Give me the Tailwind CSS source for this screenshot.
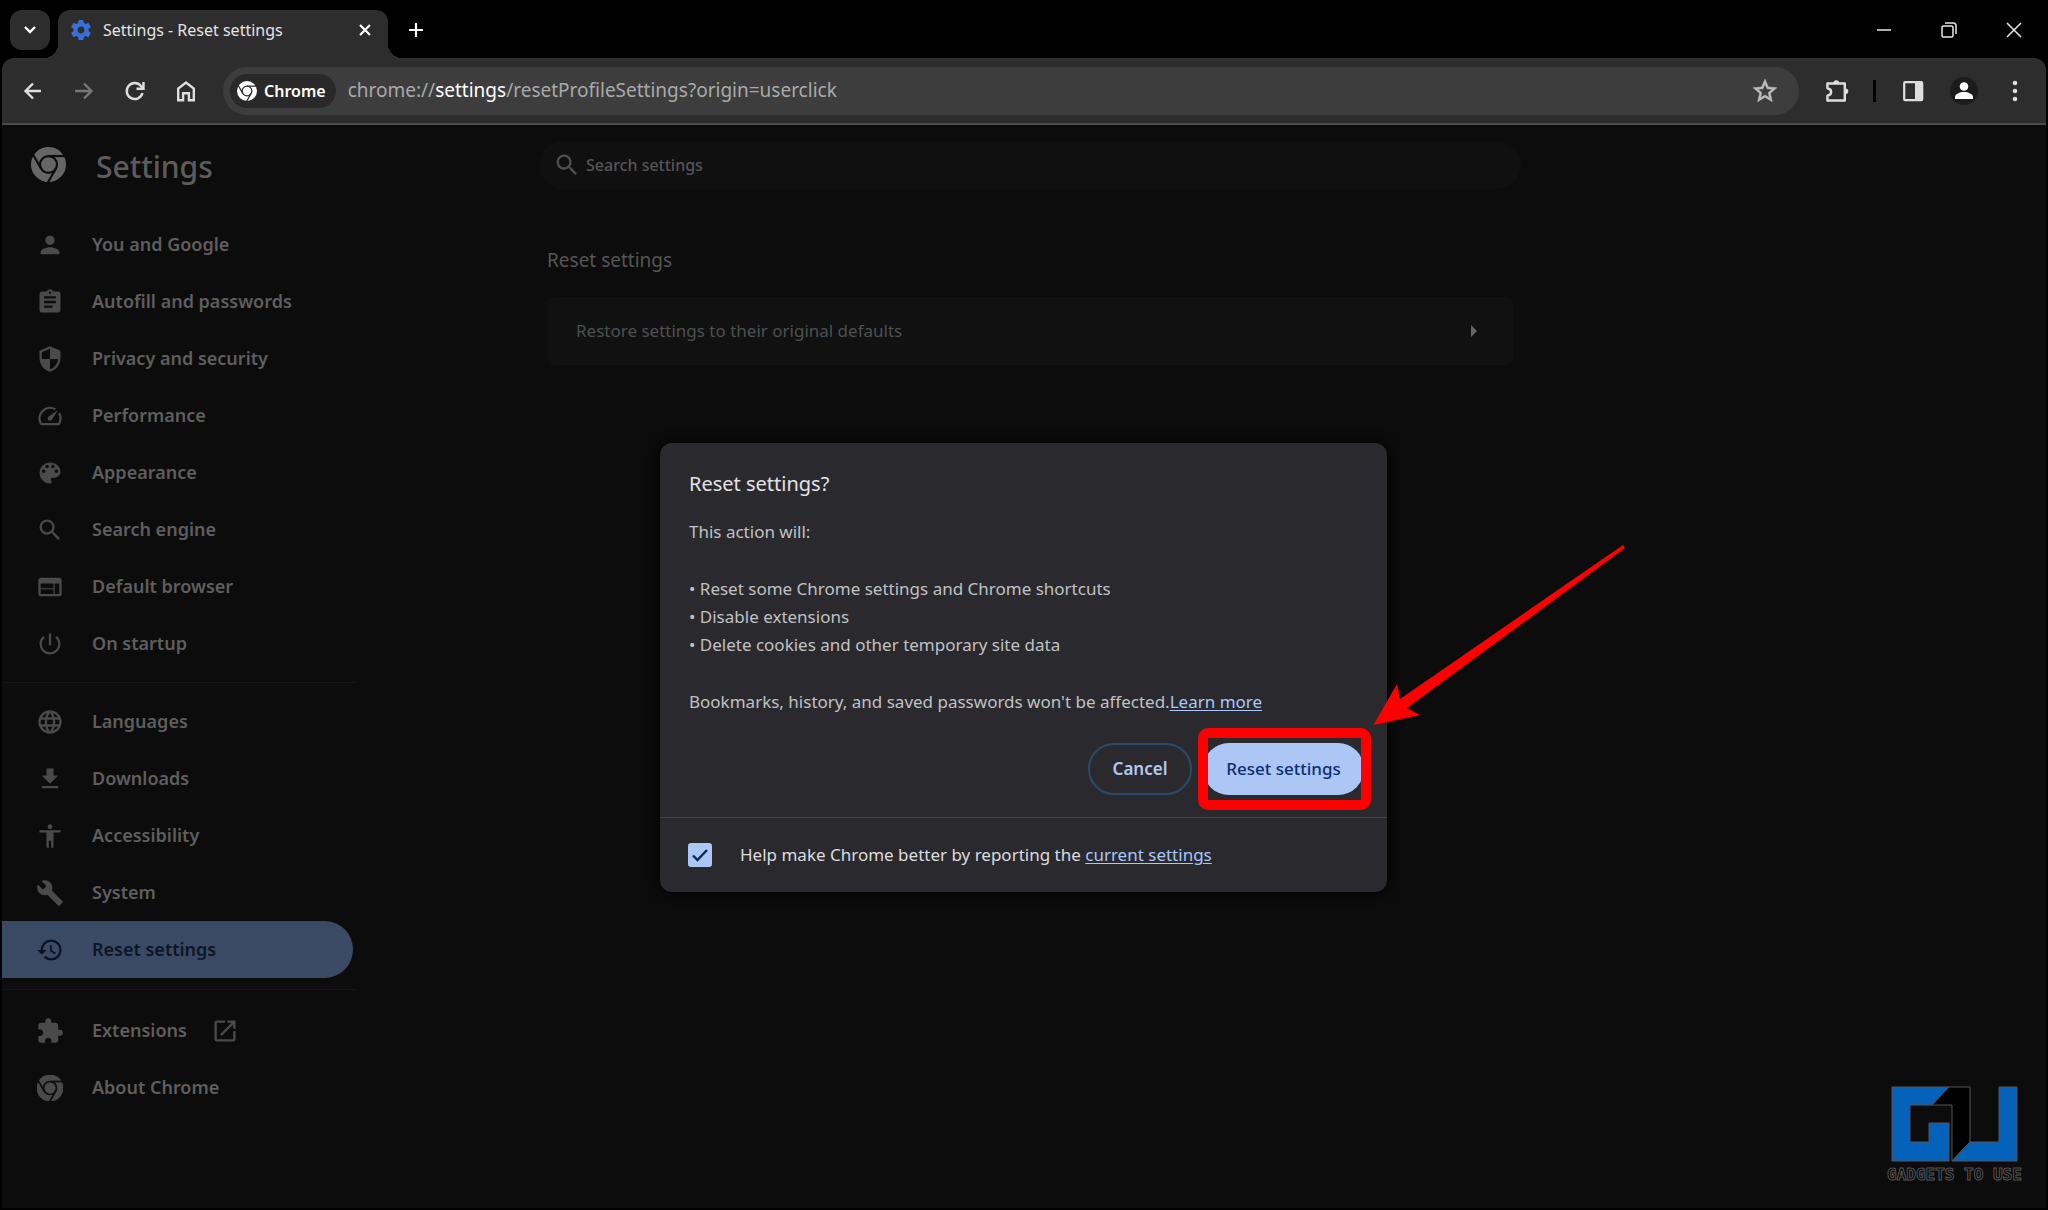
<!DOCTYPE html>
<html lang="en">
<head>
<meta charset="utf-8">
<title>Settings - Reset settings</title>
<script src="https://cdn.jsdelivr.net/npm/@tailwindcss/browser@4"></script>
</head>
<body class="bg-black font-['Noto_Sans','Open_Sans',sans-serif]">
<svg class="absolute size-0" aria-hidden="true">
  <defs>
    <mask id="chrome-cut" maskUnits="userSpaceOnUse" x="0" y="0" width="24" height="24">
      <circle cx="12" cy="12" r="12" fill="#fff"/>
      <g fill="none" stroke="#000" stroke-width="1.5">
        <circle cx="12" cy="12" r="5.8"/>
        <path d="M12 6.2H24"/>
        <path d="M12 6.2H24" transform="rotate(120 12 12)"/>
        <path d="M12 6.2H24" transform="rotate(240 12 12)"/>
      </g>
    </mask>
    <symbol id="chrome" viewBox="0 0 24 24"><rect width="24" height="24" fill="currentColor" mask="url(#chrome-cut)"/></symbol>
    <symbol id="search" viewBox="0 0 24 24"><path fill="currentColor" d="M15.5 14h-.79l-.28-.27A6.47 6.47 0 0 0 16 9.5 6.5 6.5 0 1 0 9.5 16c1.61 0 3.09-.59 4.23-1.57l.27.28v.79l5 4.99L20.49 19l-4.99-5zm-6 0C7.01 14 5 11.99 5 9.5S7.01 5 9.5 5 14 7.01 14 9.5 11.99 14 9.5 14z"/></symbol>
  </defs>
</svg>

<div class="flex min-h-screen flex-col px-[2px] pb-[2px]">
  <!-- Tab strip -->
  <header class="flex h-[58px] items-start pl-2 pt-[10px]">
    <button aria-label="Search tabs" class="flex size-10 items-center justify-center rounded-xl bg-[#2d2d2d] text-white">
      <svg class="size-4" viewBox="0 0 16 16" fill="none" stroke="currentColor" stroke-width="2.4"><path d="M3 5l5 5 5-5"/></svg>
    </button>
    <div class="relative ml-2 flex h-12 w-[330px] items-center rounded-t-xl bg-[#2d2d2d] pl-[13px] pr-4 pb-2">
      <span class="absolute bottom-0 -left-[14px] size-[14px] bg-[radial-gradient(circle_at_top_left,transparent_14px,#2d2d2d_14px)]"></span>
      <span class="absolute bottom-0 -right-[14px] size-[14px] bg-[radial-gradient(circle_at_top_right,transparent_14px,#2d2d2d_14px)]"></span>
      <svg class="size-5 text-[#3a6fd8]" viewBox="2 2 20 20" fill="currentColor"><path d="M19.43 12.98c.04-.32.07-.64.07-.98s-.03-.66-.07-.98l2.11-1.65c.19-.15.24-.42.12-.64l-2-3.46c-.12-.22-.39-.3-.61-.22l-2.49 1c-.52-.4-1.08-.73-1.69-.98l-.38-2.65A.49.49 0 0 0 14 2h-4c-.25 0-.46.18-.49.42l-.38 2.65c-.61.25-1.17.59-1.69.98l-2.49-1c-.23-.09-.49 0-.61.22l-2 3.46c-.13.22-.07.49.12.64l2.11 1.65c-.04.32-.07.65-.07.98s.03.66.07.98l-2.11 1.65c-.19.15-.24.42-.12.64l2 3.46c.12.22.39.3.61.22l2.49-1c.52.4 1.08.73 1.69.98l.38 2.65c.03.24.24.42.49.42h4c.25 0 .46-.18.49-.42l.38-2.65c.61-.25 1.17-.59 1.69-.98l2.49 1c.23.09.49 0 .61-.22l2-3.46c.12-.22.07-.49-.12-.64l-2.11-1.65zM12 15.5c-1.93 0-3.5-1.57-3.5-3.5s1.57-3.5 3.5-3.5 3.5 1.57 3.5 3.5-1.57 3.5-3.5 3.5z"/></svg>
      <span class="ml-3 flex-1 truncate text-[16px] text-[#e3e3e3]">Settings - Reset settings</span>
      <button aria-label="Close tab" class="text-white"><svg class="size-[14px]" viewBox="0 0 14 14" stroke="currentColor" stroke-width="2.2"><path d="M2 2l10 10M12 2L2 12"/></svg></button>
    </div>
    <button aria-label="New tab" class="ml-2 flex size-10 items-center justify-center text-white"><svg class="size-4" viewBox="0 0 16 16" stroke="currentColor" stroke-width="2.2"><path d="M8 1v14M1 8h14"/></svg></button>
    <div class="ml-auto flex h-10 items-center gap-[49px] pr-6 text-[#e8e8e8]">
      <button aria-label="Minimize"><svg class="size-4" viewBox="0 0 16 16" stroke="currentColor" stroke-width="1.5"><path d="M1 8h14"/></svg></button>
      <button aria-label="Restore"><svg class="size-4" viewBox="0 0 16 16" fill="none" stroke="currentColor" stroke-width="1.5"><rect x="1" y="4" width="11" height="11" rx="1.5"/><path d="M4 1h8q3 0 3 3v8"/></svg></button>
      <button aria-label="Close"><svg class="size-4" viewBox="0 0 16 16" stroke="currentColor" stroke-width="1.5"><path d="M1 1l14 14M15 1L1 15"/></svg></button>
    </div>
  </header>

  <!-- Toolbar -->
  <div class="flex h-[67px] items-center rounded-t-xl border-b-2 border-[#4c4c4c] bg-[#2d2d2d] pl-5 pr-5 text-[#dedede]">
    <div class="flex gap-[29px]">
      <button aria-label="Back"><svg class="size-[22px]" viewBox="0 0 22 22" fill="none" stroke="currentColor" stroke-width="2.4"><path d="M19 11H4M11 3.500L3.500 11l7.500 7.500"/></svg></button>
      <button aria-label="Forward" class="text-[#777]"><svg class="size-[22px]" viewBox="0 0 22 22" fill="none" stroke="currentColor" stroke-width="2.4"><path d="M2 11h16M11 3.500l7.500 7.500-7.500 7.500"/></svg></button>
      <button aria-label="Reload"><svg class="size-[22px]" viewBox="0 0 22 22" fill="none" stroke="currentColor" stroke-width="2.4"><path d="M18.500 13A8 8 0 1 1 17 6l2 2M19.500 2v6.800H12.500"/></svg></button>
      <button aria-label="Home"><svg class="size-[22px]" viewBox="0 0 22 22" fill="none" stroke="currentColor" stroke-width="2.4"><path d="M3.200 20.300V8.500L11 2.500l7.800 6v11.800h-4.900v-7H8.100v7z"/></svg></button>
    </div>
    <div class="ml-[26px] flex h-12 flex-1 items-center rounded-full bg-[#3d3d3d] pl-[7px] pr-[21px]">
      <button class="flex h-[34px] items-center gap-[7px] rounded-full bg-[#292929] pl-[7px] pr-[10px] text-[16px] font-semibold text-white">
        <svg class="size-5"><use href="#chrome"/></svg>Chrome</button>
      <div role="textbox" contenteditable="true" spellcheck="false" aria-label="Address" class="ml-3 flex-1 text-[19px] text-[#a9a9a9]">chrome://<span class="text-white">settings</span>/resetProfileSettings?origin=userclick</div>
      <button aria-label="Bookmark this tab" class="text-[#bdbdbd]"><svg class="size-[26px]" viewBox="1 1 22 22" fill="currentColor" stroke="currentColor" stroke-width=".5"><path d="M22 9.240l-7.190-.62L12 2 9.190 8.630 2 9.240l5.460 4.730L5.820 21 12 17.270 18.180 21l-1.630-7.030L22 9.240zM12 15.400l-3.760 2.270 1-4.280-3.320-2.880 4.380-.38L12 6.100l1.710 4.040 4.380.38-3.320 2.880 1 4.280L12 15.400z"/></svg></button>
    </div>
    <div class="ml-[26px] flex items-center">
      <button aria-label="Extensions"><svg class="size-6" viewBox="0 0 24 24" fill="none" stroke="currentColor" stroke-width="2.400"><path d="M2.400 4.500h17.400v17H2.400v-4.800c5-1 5-6.400 0-7.400z" stroke-linejoin="round"/><path d="M8.500 4a2.800 2.800 0 0 1 5.600 0zM20.500 9.500a2.800 2.800 0 0 1 0 5.600z" fill="currentColor" stroke="none"/></svg></button>
      <span class="ml-6 h-[22px] w-[3px] bg-black"></span>
      <button aria-label="Side panel" class="ml-[26px]"><svg class="size-[22px]" viewBox="0 0 22 22"><rect x="2.200" y="2.200" width="18" height="18" rx="1" fill="none" stroke="currentColor" stroke-width="2.200"/><path d="M13 2h7v18h-7z" fill="currentColor"/></svg></button>
      <button aria-label="Profile" class="ml-[26px] flex size-7 items-center justify-center rounded-full bg-[#1c1c1c] text-white"><svg class="size-[18px]" viewBox="0 0 18 18" fill="currentColor"><circle cx="9" cy="4.500" r="4.300"/><path d="M0 17v-2c0-3 5-5 9-5s9 2 9 5v2z"/></svg></button>
      <button aria-label="Menu" class="ml-[26px]"><svg class="h-[22px] w-[22px]" viewBox="0 0 22 22" fill="currentColor"><circle cx="11" cy="3" r="2.300"/><circle cx="11" cy="11" r="2.300"/><circle cx="11" cy="19" r="2.300"/></svg></button>
    </div>
  </div>

  <!-- Settings page -->
  <div class="relative grid flex-1 grid-cols-[minmax(0,1fr)_994px_minmax(0,1fr)] bg-[#0c0c0c]">
    <div>
      <div class="flex h-[91px] items-center gap-[30px] pb-3 pl-[29px]">
        <svg class="size-[35px] text-[#666]"><use href="#chrome"/></svg>
        <h1 class="pt-1 text-[30px] font-medium text-[#5c5c5c]">Settings</h1>
      </div>
      <nav class="w-[354px] text-[18px] font-semibold text-[#5e5e5e] [&_a]:flex [&_a]:h-[57px] [&_a]:items-center [&_a]:gap-7 [&_a]:pl-[34px] [&_svg]:size-7 [&_svg]:text-[#4a4a4a]">
        <a href="#"><svg viewBox="0 0 24 24" fill="currentColor"><path d="M12 12c2.210 0 4-1.790 4-4s-1.790-4-4-4-4 1.790-4 4 1.790 4 4 4zm0 2c-2.670 0-8 1.340-8 4v2h16v-2c0-2.660-5.330-4-8-4z"/></svg>You and Google</a>
        <a href="#"><svg viewBox="0 0 24 24" fill="currentColor"><path d="M19 3h-4.180C14.400 1.840 13.300 1 12 1s-2.400.84-2.820 2H5c-1.100 0-2 .9-2 2v14c0 1.100.9 2 2 2h14c1.100 0 2-.9 2-2V5c0-1.100-.9-2-2-2zm-7 0c.55 0 1 .45 1 1s-.45 1-1 1-1-.45-1-1 .45-1 1-1zm2 14H7v-2h7v2zm3-4H7v-2h10v2zm0-4H7V7h10v2z"/></svg>Autofill and passwords</a>
        <a href="#"><svg viewBox="0 0 24 24" fill="currentColor"><path d="M12 1L3 5v6c0 5.550 3.840 10.740 9 12 5.160-1.260 9-6.450 9-12V5l-9-4zm0 10.990h7c-.53 4.120-3.280 7.790-7 8.940V12H5V6.300l7-3.110v8.800z"/></svg>Privacy and security</a>
        <a href="#"><svg viewBox="0 0 24 24" fill="currentColor"><path d="M20.380 8.570l-1.230 1.850a8 8 0 0 1-.22 7.580H5.070A8 8 0 0 1 15.580 6.850l1.850-1.230A10 10 0 0 0 3.350 19a2 2 0 0 0 1.720 1h13.850a2 2 0 0 0 1.740-1 10 10 0 0 0-.27-10.440zm-9.790 6.840a2 2 0 0 0 2.830 0l5.660-8.490-8.490 5.660a2 2 0 0 0 0 2.830z"/></svg>Performance</a>
        <a href="#"><svg viewBox="0 0 24 24" fill="currentColor"><path d="M12 3a9 9 0 0 0 0 18c.83 0 1.500-.67 1.500-1.500 0-.39-.15-.74-.39-1.010-.23-.26-.38-.61-.38-.99 0-.83.67-1.500 1.500-1.500H16c2.760 0 5-2.240 5-5 0-4.420-4.030-8-9-8zm-5.500 9c-.83 0-1.500-.67-1.500-1.500S5.670 9 6.500 9 8 9.670 8 10.500 7.330 12 6.500 12zm3-4C8.670 8 8 7.330 8 6.500S8.670 5 9.500 5s1.500.67 1.500 1.500S10.330 8 9.500 8zm5 0c-.83 0-1.500-.67-1.500-1.500S13.670 5 14.500 5s1.500.67 1.500 1.500S15.330 8 14.500 8zm3 4c-.83 0-1.500-.67-1.500-1.500S16.670 9 17.500 9s1.500.67 1.500 1.500-.67 1.500-1.500 1.500z"/></svg>Appearance</a>
        <a href="#"><svg><use href="#search"/></svg>Search engine</a>
        <a href="#"><svg viewBox="0 0 24 24" fill="currentColor"><path d="M20 4H4c-1.100 0-1.990.9-1.990 2L2 18c0 1.100.9 2 2 2h16c1.100 0 2-.9 2-2V6c0-1.100-.9-2-2-2zm-5 14H4v-4h11v4zm0-5H4V9h11v4zm5 5h-4V9h4v9z"/></svg>Default browser</a>
        <a href="#"><svg viewBox="0 0 24 24" fill="currentColor"><path d="M13 3h-2v10h2V3zm4.830 2.170l-1.420 1.420A6.920 6.920 0 0 1 19 12c0 3.870-3.130 7-7 7A6.995 6.995 0 0 1 7.580 6.580L6.170 5.170A8.932 8.932 0 0 0 3 12a9 9 0 0 0 18 0c0-2.740-1.230-5.180-3.170-6.830z"/></svg>On startup</a>
        <hr class="my-[10px] border-[#161616]">
        <a href="#"><svg viewBox="0 0 24 24" fill="currentColor"><path d="M11.990 2C6.470 2 2 6.480 2 12s4.470 10 9.990 10C17.520 22 22 17.520 22 12S17.520 2 11.990 2zm6.930 6h-2.950a15.650 15.650 0 0 0-1.380-3.560A8.030 8.030 0 0 1 18.920 8zM12 4.040c.83 1.200 1.480 2.530 1.910 3.960h-3.820c.43-1.430 1.080-2.760 1.910-3.960zM4.260 14C4.100 13.360 4 12.690 4 12s.1-1.360.26-2h3.380c-.08.66-.14 1.320-.14 2s.06 1.340.14 2H4.260zm.82 2h2.950c.32 1.250.78 2.450 1.380 3.560A7.987 7.987 0 0 1 5.080 16zm2.950-8H5.080a7.987 7.987 0 0 1 4.330-3.560A15.650 15.650 0 0 0 8.030 8zM12 19.960c-.83-1.200-1.480-2.530-1.910-3.960h3.820c-.43 1.430-1.080 2.760-1.910 3.960zM14.340 14H9.660c-.09-.66-.16-1.320-.16-2s.07-1.350.16-2h4.680c.09.65.16 1.320.16 2s-.07 1.340-.16 2zm.25 5.560c.6-1.110 1.060-2.310 1.380-3.560h2.950a8.030 8.030 0 0 1-4.330 3.560zM16.360 14c.08-.66.14-1.320.14-2s-.06-1.340-.14-2h3.380c.16.640.26 1.310.26 2s-.1 1.360-.26 2h-3.380z"/></svg>Languages</a>
        <a href="#"><svg viewBox="0 0 24 24" fill="currentColor"><path d="M19 9h-4V3H9v6H5l7 7 7-7zM5 18v2h14v-2H5z"/></svg>Downloads</a>
        <a href="#"><svg viewBox="0 0 24 24" fill="currentColor"><path d="M12 2c1.100 0 2 .9 2 2s-.9 2-2 2-2-.9-2-2 .9-2 2-2zm9 7h-6v13h-2v-6h-2v6H9V9H3V7h18v2z"/></svg>Accessibility</a>
        <a href="#"><svg viewBox="0 0 24 24" fill="currentColor"><path d="M22.700 19l-9.100-9.100c.9-2.300.4-5-1.500-6.900-2-2-5-2.400-7.400-1.300L9 6 6 9 1.600 4.700C.4 7.100.9 10.100 2.900 12.100c1.900 1.900 4.600 2.400 6.900 1.500l9.100 9.100c.4.4 1 .4 1.400 0l2.300-2.300c.5-.4.5-1.100.1-1.400z"/></svg>System</a>
        <a href="#" aria-current="page" class="w-[351px] rounded-r-full bg-[#3b4a64] text-[#0d1626] [&_svg]:!text-[#0a1220]"><svg viewBox="0 0 24 24" fill="currentColor"><path d="M13 3a9 9 0 0 0-9 9H1l3.890 3.890.07.14L9 12H6c0-3.870 3.130-7 7-7s7 3.130 7 7-3.130 7-7 7c-1.930 0-3.680-.79-4.940-2.060l-1.420 1.420A8.954 8.954 0 0 0 13 21a9 9 0 0 0 0-18zm-1 5v5l4.280 2.540.72-1.210-3.500-2.080V8H12z"/></svg>Reset settings</a>
        <hr class="mt-[11px] mb-3 border-[#161616]">
        <a href="#"><svg viewBox="0 0 24 24" fill="currentColor"><path d="M20.500 11H19V7c0-1.100-.9-2-2-2h-4V3.500a2.500 2.500 0 0 0-5 0V5H4c-1.100 0-1.990.9-1.990 2v3.800H3.500c1.490 0 2.700 1.210 2.700 2.700s-1.210 2.700-2.700 2.700H2V20c0 1.100.9 2 2 2h3.800v-1.500c0-1.490 1.210-2.700 2.700-2.700 1.490 0 2.700 1.210 2.700 2.700V22H17c1.100 0 2-.9 2-2v-4h1.500a2.500 2.500 0 0 0 0-5z"/></svg>Extensions
          <svg class="-ml-1" viewBox="0 0 24 24" fill="currentColor"><path d="M19 19H5V5h7V3H5a2 2 0 0 0-2 2v14a2 2 0 0 0 2 2h14c1.100 0 2-.9 2-2v-7h-2v7zM14 3v2h3.590l-9.830 9.830 1.410 1.410L19 6.410V10h2V3h-7z"/></svg></a>
        <a href="#"><svg viewBox="-0.500 -0.500 25 25"><use href="#chrome" width="24" height="24"/></svg>About Chrome</a>
      </nav>
    </div>
    <main class="pl-3 pt-4 text-[#4d5052]">
      <label class="flex h-12 items-center rounded-full bg-[#101010] pl-[14px]">
        <svg class="size-7"><use href="#search"/></svg>
        <input type="search" placeholder="Search settings" class="ml-[5px] flex-1 bg-transparent text-[16px] font-medium outline-none placeholder:text-[#555]">
      </label>
      <section class="mx-2 mt-[56px]">
        <h2 class="text-[19px] leading-[30px] text-[#555]">Reset settings</h2>
        <a href="#" class="mt-[22px] flex h-[68px] items-center justify-between rounded-lg bg-[#111] pl-[29px] pr-9">
          <span class="text-[17px]">Restore settings to their original defaults</span>
          <svg class="h-3 w-[6px] text-[#666]" viewBox="0 0 6 12" fill="currentColor"><path d="M0 0l6 6-6 6z"/></svg>
        </a>
      </section>
    </main>
    <div class="flex items-end justify-end pr-[22px] pb-[25px]">
      <svg class="h-[97px] w-[139px] overflow-visible" viewBox="0 0 139 97" role="img" aria-label="Gadgets To Use">
        <g stroke="#555" stroke-width="1">
          <path fill="#0462bb" d="M7 1h57L47 19H25v37h19V37h20v38H7z"/>
          <path fill="#000" d="M64 1h21v55L67 75V19H47z"/>
          <path fill="#0462bb" d="M114 1h18v74H67l18-19h29z"/>
          <text class="font-['DejaVu_Sans_Mono'] text-[16px] font-bold" x="2" y="94" fill="#000" stroke="#555">GADGETS TO USE</text>
        </g>
      </svg>
    </div>

    <!-- Modal dialog -->
    <div class="absolute inset-0 flex items-center justify-center pr-px pt-px">
      <div role="dialog" aria-labelledby="dlg" class="relative w-[727px] rounded-xl bg-[#2a2a2e] pt-[25px] shadow-[0_0_14px_#000]">
        <h2 id="dlg" class="px-[29px] text-[20px] leading-8 text-[#e3e3e3]">Reset settings?</h2>
        <div class="mt-[18px] px-[29px] text-[17px] leading-7 text-[#c0c1c3]">
          <p>This action will:</p>
          <ul class="mt-[29px]">
            <li>• Reset some Chrome settings and Chrome shortcuts</li>
            <li>• Disable extensions</li>
            <li>• Delete cookies and other temporary site data</li>
          </ul>
          <p class="mt-[29px]">Bookmarks, history, and saved passwords won't be affected.<a href="#" class="text-[#a8c7fa] underline underline-offset-2">Learn more</a></p>
        </div>
        <div class="mt-[27px] flex justify-end gap-[11px] pr-[23px] pb-[22px] text-[17px]">
          <button class="h-[52px] w-[104px] rounded-full border-2 border-[#2b4a6b] font-semibold text-[#b4c8ee]">Cancel</button>
          <button class="relative h-[52px] w-[161px] rounded-full bg-[#acc6f6] font-medium text-[#0b2f6f]">Reset settings
            <span class="absolute -top-[15px] -bottom-[15px] -left-[5px] -right-[7px] rounded-[10px] border-10 border-[#fe0000]"></span>
          </button>
        </div>
        <div class="flex h-[75px] items-center border-t border-[#434347] pl-7">
          <span class="relative flex size-6">
            <input id="report" type="checkbox" checked class="size-6 appearance-none rounded-[3px] bg-[#acc6f6]">
            <svg class="pointer-events-none absolute inset-0 size-6" viewBox="0 0 24 24" fill="none" stroke="#12294f" stroke-width="2.400"><path d="M5 12.500l4.500 4.500L19 7"/></svg>
          </span>
          <label for="report" class="ml-7 text-[17px] text-[#dcdcde]">Help make Chrome better by reporting the <a href="#" class="text-[#a8c7fa] underline underline-offset-2">current settings</a></label>
        </div>
        <svg class="pointer-events-none absolute left-[713px] top-[102px] h-[182px] w-[254px]" viewBox="0 0 254 182" fill="#fe0000" aria-hidden="true"><path d="M0.500 180L24 139L27 154L250 0L252 3L34 163L47 170z"/></svg>
      </div>
    </div>
  </div>
</div>
</body>
</html>
